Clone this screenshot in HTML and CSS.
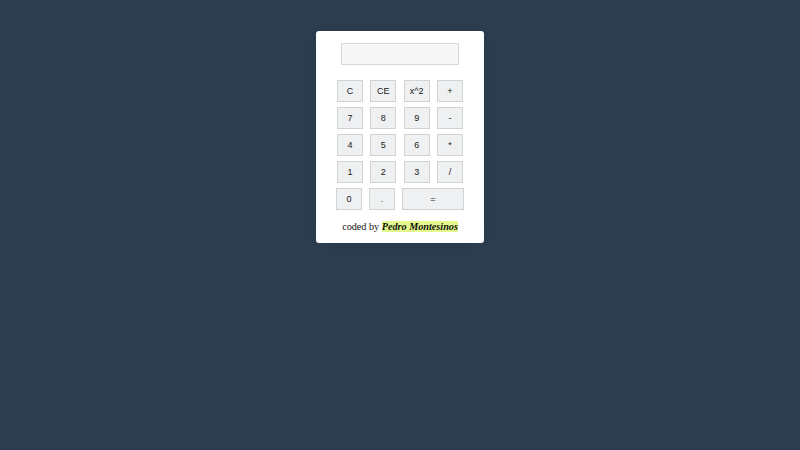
FILE: index.html
```html
<!DOCTYPE html>
<html>
<head>
<meta charset="utf-8">
<title>Calculator</title>
<link rel="stylesheet" href="styles.css">
</head>
<body>
<div class="calc">
  <input class="display" type="text" readonly>
  <div class="keys">
    <div class="row">
      <button class="key">C</button>
      <button class="key">CE</button>
      <button class="key">x^2</button>
      <button class="key">+</button>
    </div>
    <div class="row">
      <button class="key">7</button>
      <button class="key">8</button>
      <button class="key">9</button>
      <button class="key">-</button>
    </div>
    <div class="row">
      <button class="key">4</button>
      <button class="key">5</button>
      <button class="key">6</button>
      <button class="key">*</button>
    </div>
    <div class="row">
      <button class="key">1</button>
      <button class="key">2</button>
      <button class="key">3</button>
      <button class="key">/</button>
    </div>
    <div class="row last">
      <button class="key">0</button>
      <button class="key">.</button>
      <button class="key wide">=</button>
    </div>
  </div>
  <p class="credit">coded by <strong class="name"><em>Pedro Montesinos</em></strong></p>
</div>
</body>
</html>
```
FILE: styles.css
```css
html, body {
  margin: 0;
  padding: 0;
  background: #2c3e50;
  width: 800px;
  height: 450px;
}
body {
  display: flex;
  justify-content: center;
  align-items: flex-start;
}
.calc {
  margin-top: 31px;
  width: 168px;
  height: 212px;
  box-sizing: border-box;
  background: #ffffff;
  border-radius: 3px;
  box-shadow: 0 0 18px rgba(0, 0, 0, 0.12);
  display: flex;
  flex-direction: column;
  align-items: center;
  padding-top: 12px;
}
.display {
  width: 118px;
  height: 22px;
  box-sizing: border-box;
  border: 1px solid #d8d8d8;
  background: #f7f7f7;
  margin: 0;
  padding: 0;
  outline: none;
}
.keys {
  margin-top: 15px;
  display: flex;
  flex-direction: column;
  gap: 5px;
}
.row {
  display: flex;
  justify-content: center;
  gap: 7.33px;
}
.row.last {
  gap: 7px;
}
.key {
  width: 26px;
  height: 22px;
  margin: 0;
  padding: 0;
  box-sizing: border-box;
  border: 1px solid #cfd3d4;
  background: #eef0f1;
  color: #1a1a1a;
  font-family: "Liberation Sans", Arial, sans-serif;
  font-size: 9px;
  line-height: 20px;
  text-align: center;
}
.key.wide {
  width: 62px;
}
.credit {
  margin: 10px 0 0 0;
  font-family: "Liberation Serif", "Times New Roman", serif;
  font-size: 10.2px;
  color: #111;
  line-height: 14px;
}
.name {
  background: #e5f98a;
}
```
